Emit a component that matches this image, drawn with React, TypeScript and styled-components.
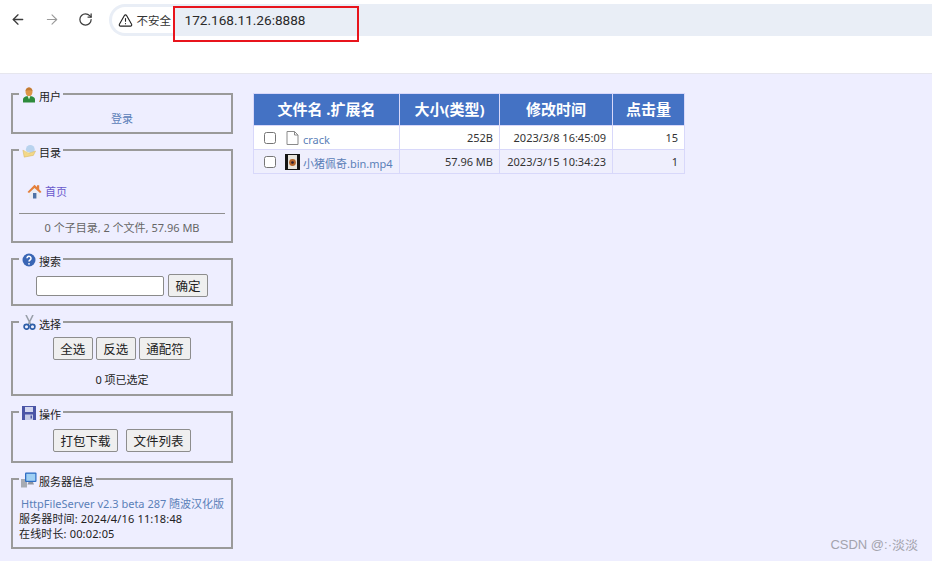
import React from "react";
import styled, { createGlobalStyle } from "styled-components";
import { ArrowLeft, ArrowRight, RotateCw, TriangleAlert } from "lucide-react";

const GlobalStyle = createGlobalStyle`
  html, body {
    margin: 0;
    padding: 0;
    background: #eeeeff;
  }
  body {
    width: 932px;
    height: 561px;
    overflow: hidden;
    font-family: "Noto Sans", "Noto Sans CJK SC", sans-serif;
    font-size: 11px;
    line-height: 15px;
    color: #333;
  }
`;

const Screen = styled.div`
  position: relative;
  width: 932px;
  height: 561px;
  overflow: hidden;
`;

const BrowserBar = styled.header`
  height: 74px;
  box-sizing: border-box;
  background: #fff;
  border-bottom: 1px solid #e6e6ee;
  padding: 4px 0 0 10px;
  display: flex;
  align-items: flex-start;
`;

const NavButton = styled.button<{ $muted?: boolean }>`
  width: 16px;
  height: 30px;
  padding: 0;
  margin-right: 17.5px;
  border: 0;
  background: none;
  display: flex;
  align-items: center;
  justify-content: center;
  color: ${(p) => (p.$muted ? "#9a9a9a" : "#3c3c3c")};
`;

const AddressBar = styled.div`
  flex: 1;
  height: 32px;
  margin-left: -2px;
  border-radius: 16px 0 0 16px;
  background: #e9eef6;
  display: flex;
  align-items: center;
  padding-left: 3px;
`;

const SecurityChip = styled.div`
  width: 62px;
  height: 26px;
  box-sizing: border-box;
  padding-left: 6px;
  border-radius: 13px 0 0 13px;
  background: #fff;
  display: flex;
  align-items: center;
  gap: 4px;
  font-size: 11.5px;
  color: #333;
  white-space: nowrap;
`;

const UrlText = styled.span`
  margin-left: 11px;
  font-family: "Roboto", sans-serif;
  font-size: 13.6px;
  color: #2a2a2a;
`;

const RedMark = styled.div`
  position: absolute;
  left: 173px;
  top: 6px;
  width: 186px;
  height: 36px;
  box-sizing: border-box;
  border: 2px solid #e8141c;
`;

const Page = styled.main`
  display: flex;
  align-items: flex-start;
  padding: 9px 0 0 11px;
`;

const Sidebar = styled.aside`
  width: 222px;
  margin-right: 20px;
  display: flex;
  flex-direction: column;
  gap: 5px;
`;

const Panel = styled.fieldset<{ $height: number }>`
  height: ${(p) => p.$height}px;
  box-sizing: border-box;
  margin: 0;
  padding: 0 6px;
  min-width: 0;
  border: 2px solid #9a9a9a;
  text-align: center;
  display: flex;
  flex-direction: column;
  align-items: center;
`;

const PanelTitle = styled.legend`
  height: 22px;
  box-sizing: border-box;
  margin-left: 0;
  padding: 6px 2px 0 3px;
  display: flex;
  align-items: center;
  gap: 3px;
  font-size: 11px;
  line-height: 16px;
  color: #222;
  text-align: left;
`;

const IconSlot = styled.span`
  width: 14px;
  height: 17px;
  margin-top: -3px;
  align-self: flex-start;
  display: flex;
  align-items: center;
  justify-content: center;
`;

const PanelLink = styled.a`
  color: #5b80b8;
  text-decoration: none;
`;

const LoginLink = styled(PanelLink)`
  margin-top: 6px;
`;

const FolderBlock = styled.div`
  width: 100%;
  height: 38px;
  box-sizing: border-box;
  padding: 19px 0 0 8px;
  text-align: left;
  display: flex;
  align-items: flex-end;
  gap: 3px;
`;

const VisitedLink = styled.a`
  color: #6a5acd;
  text-decoration: none;
`;

const FolderRule = styled.hr`
  width: 100%;
  margin: 14px 0 6px;
  border: 0;
  border-top: 1px solid #8f8f8f;
`;

const MutedLine = styled.div`
  color: #666;
`;

const ActionRow = styled.div<{ $top: number; $gap?: number }>`
  margin-top: ${(p) => p.$top}px;
  display: flex;
  justify-content: center;
  gap: ${(p) => p.$gap ?? 3}px;
  align-items: center;
`;

const SearchBox = styled.input`
  width: 128px;
  height: 20px;
  box-sizing: border-box;
  margin-right: 1px;
  border: 1px solid #8a8a8a;
  border-radius: 2px;
  background: #fff;
`;

const PlainButton = styled.button`
  height: 23px;
  box-sizing: border-box;
  padding: 0 6.5px;
  font-family: inherit;
  font-size: 12.5px;
  color: #222;
  background: #efefef;
  border: 1px solid #8d8d8d;
  border-radius: 2px;
  white-space: nowrap;
`;

const SelectedCount = styled.div`
  margin-top: 12px;
  color: #222;
`;

const InfoBlock = styled.div`
  width: 100%;
  margin-top: 6px;
  text-align: left;
  color: #222;
  white-space: nowrap;
`;

const ServerLink = styled(PanelLink)`
  display: block;
  padding-left: 2px;
`;

const InfoLine = styled.div`
  letter-spacing: 0.15px;
`;

const FileTable = styled.table`
  border-collapse: separate;
  border-spacing: 1px;
  margin-top: 10px;
  background: #d8d8fa;
  padding: 0;
  table-layout: fixed;
  width: 432px;
`;

const HeadCell = styled.th<{ $width: number }>`
  width: ${(p) => p.$width}px;
  height: 31px;
  padding: 0;
  background: #4472c4;
  color: #fff;
  font-size: 15px;
  font-weight: 700;
  text-align: center;
`;

const Row = styled.tr<{ $alt?: boolean }>`
  height: 23px;
  td {
    background: ${(p) => (p.$alt ? "#efeffd" : "#fff")};
  }
`;

const NameCell = styled.td`
  padding: 0 0 0 10px;
  white-space: nowrap;
`;

const NameWrap = styled.div`
  display: flex;
  align-items: center;
`;

const FileCheck = styled.input`
  width: 12px;
  height: 12px;
  margin: 0 9px 0 0;
`;

const FileIconSlot = styled.span`
  width: 15px;
  height: 16px;
  display: flex;
  justify-content: center;
  align-items: center;
`;

const FileLink = styled(PanelLink)`
  margin: 3px 0 0 3px;
`;

const ValueCell = styled.td`
  padding: 0 6px 0 0;
  text-align: right;
  color: #333;
  white-space: nowrap;
`;

const Watermark = styled.div`
  position: absolute;
  right: 14px;
  bottom: 9px;
  font-family: "Liberation Sans", "Noto Sans CJK SC", sans-serif;
  font-size: 13px;
  color: #a3a3ad;
`;

const UserIcon = () => (
  <svg width="14" height="16" viewBox="0 0 14 16">
    <path d="M3.5 4.5C3.5 2 5 .5 7 .5s3.5 1.5 3.5 4S9 9.5 7 9.5 3.5 7 3.5 4.5z" fill="#dd9648" />
    <path d="M3.5 4C4 1.8 5.2.5 7 .5S10 1.8 10.5 4C9 3 5 3 3.5 4z" fill="#c27a33" />
    <path d="M1 15.5v-3C1 10.2 3.5 9 7 9s6 1.2 6 3.5v3z" fill="#2e8b3c" />
    <path d="M5.5 9h3L7 12.5z" fill="#e4f3e0" />
  </svg>
);

const FolderIcon = () => (
  <svg width="16" height="16" viewBox="0 0 16 16">
    <circle cx="9.5" cy="6" r="5" fill="#b9d3ee" />
    <path d="M1 7l1.5 8L13 13l2.5-5-7.5 2.5z" fill="#f3d888" stroke="#d2ae58" strokeWidth="0.5" />
    <path d="M1 7l7 3.5 7.5-2.5-6.5 2z" fill="#fbeebc" />
  </svg>
);

const HomeIcon = () => (
  <svg width="15" height="15" viewBox="0 0 15 15">
    <path d="M2 7l5.5-5L13 7v7.5H2z" fill="#eceef4" />
    <path d="M.5 8L7.5 .8 10 3V1.2h2.2V5.2L14.5 8 13 9 7.5 4 2 9z" fill="#e47f3c" />
    <rect x="6" y="9" width="3.4" height="5.5" fill="#4f73a6" />
  </svg>
);

const HelpIcon = () => (
  <svg width="14" height="14" viewBox="0 0 14 14">
    <circle cx="7" cy="7" r="6.5" fill="#3a66b5" />
    <path d="M5 5.2a2 2 0 1 1 3 1.8c-.7.4-1 .8-1 1.6" fill="none" stroke="#fff" strokeWidth="1.5" />
    <circle cx="7" cy="10.8" r="0.9" fill="#fff" />
  </svg>
);

const ScissorsIcon = () => (
  <svg width="13" height="15" viewBox="0 0 13 15">
    <path d="M3 0l5 10M10 0L5 10" stroke="#9aa0aa" strokeWidth="1.6" fill="none" />
    <circle cx="3.5" cy="11.8" r="2.4" fill="none" stroke="#2f5fa8" strokeWidth="1.7" />
    <circle cx="9.5" cy="11.8" r="2.4" fill="none" stroke="#2f5fa8" strokeWidth="1.7" />
  </svg>
);

const SaveIcon = () => (
  <svg width="14" height="14" viewBox="0 0 14 14">
    <path d="M0 0h14v14H0z" fill="#4b55a6" />
    <rect x="3" y="1" width="8" height="5" fill="#d3d7ef" />
    <rect x="3" y="8.5" width="8" height="5.5" fill="#c6cbe6" />
    <rect x="8.5" y="9.5" width="1.5" height="3" fill="#4b55a6" />
  </svg>
);

const ServerIcon = () => (
  <svg width="16" height="16" viewBox="0 0 16 16" style={{ flex: "none" }}>
    <rect x="0" y="7" width="6" height="8.5" fill="#a7abb3" />
    <rect x="4" y="0.5" width="11.5" height="9.5" rx="1" fill="#2f6dc4" />
    <rect x="5.3" y="1.8" width="9" height="7" fill="#9fd0f4" />
    <path d="M7.5 10h4.5l1 2.5H6.5z" fill="#8f96a3" />
  </svg>
);

const PageIcon = () => (
  <svg width="13" height="14" viewBox="0 0 13 14">
    <path d="M1 .5h7.5L12 4v9.5H1z" fill="#fff" stroke="#8a8a8a" />
    <path d="M8.5.5V4H12" fill="none" stroke="#8a8a8a" />
  </svg>
);

const VideoIcon = () => (
  <svg width="15" height="16" viewBox="0 0 15 16">
    <rect width="15" height="16" fill="#151515" />
    <rect x="3" y="1" width="9" height="14" fill="#e8e4dc" />
    <circle cx="7.5" cy="8.5" r="3.4" fill="#b5652a" />
    <circle cx="7.5" cy="8.5" r="1.3" fill="#2a1c30" />
  </svg>
);

const columns = [
  { label: "文件名 .扩展名", width: 145 },
  { label: "大小(类型)", width: 99 },
  { label: "修改时间", width: 112 },
  { label: "点击量", width: 71 },
];

const files = [
  { name: "crack", size: "252B", date: "2023/3/8 16:45:09", hits: 15, icon: <PageIcon /> },
  { name: "小猪佩奇.bin.mp4", size: "57.96 MB", date: "2023/3/15 10:34:23", hits: 1, icon: <VideoIcon /> },
];

export default function App() {
  return (
    <Screen>
      <GlobalStyle />
      <BrowserBar>
        <NavButton><ArrowLeft size={17} strokeWidth={2} /></NavButton>
        <NavButton $muted><ArrowRight size={17} strokeWidth={1.6} /></NavButton>
        <NavButton><RotateCw size={15} strokeWidth={2} /></NavButton>
        <AddressBar>
          <SecurityChip>
            <TriangleAlert size={15} strokeWidth={1.8} color="#222" />
            不安全
          </SecurityChip>
          <UrlText>172.168.11.26:8888</UrlText>
        </AddressBar>
      </BrowserBar>
      <RedMark />
      <Page>
        <Sidebar>
          <Panel $height={51}>
            <PanelTitle><IconSlot><UserIcon /></IconSlot>用户</PanelTitle>
            <LoginLink href="#">登录</LoginLink>
          </Panel>
          <Panel $height={104}>
            <PanelTitle><IconSlot><FolderIcon /></IconSlot>目录</PanelTitle>
            <FolderBlock>
              <HomeIcon />
              <VisitedLink href="#">首页</VisitedLink>
            </FolderBlock>
            <FolderRule />
            <MutedLine>0 个子目录, 2 个文件, 57.96 MB</MutedLine>
          </Panel>
          <Panel $height={58}>
            <PanelTitle><IconSlot><HelpIcon /></IconSlot>搜索</PanelTitle>
            <ActionRow $top={4}>
              <SearchBox />
              <PlainButton>确定</PlainButton>
            </ActionRow>
          </Panel>
          <Panel $height={85}>
            <PanelTitle><IconSlot><ScissorsIcon /></IconSlot>选择</PanelTitle>
            <ActionRow $top={4}>
              <PlainButton>全选</PlainButton>
              <PlainButton>反选</PlainButton>
              <PlainButton>通配符</PlainButton>
            </ActionRow>
            <SelectedCount>0 项已选定</SelectedCount>
          </Panel>
          <Panel $height={62}>
            <PanelTitle><IconSlot><SaveIcon /></IconSlot>操作</PanelTitle>
            <ActionRow $top={6} $gap={8}>
              <PlainButton>打包下载</PlainButton>
              <PlainButton>文件列表</PlainButton>
            </ActionRow>
          </Panel>
          <Panel $height={81}>
            <PanelTitle><IconSlot><ServerIcon /></IconSlot>服务器信息</PanelTitle>
            <InfoBlock>
              <ServerLink href="#">HttpFileServer v2.3 beta 287 随波汉化版</ServerLink>
              <InfoLine>服务器时间: 2024/4/16 11:18:48</InfoLine>
              <InfoLine>在线时长: 00:02:05</InfoLine>
            </InfoBlock>
          </Panel>
        </Sidebar>
        <FileTable>
          <thead>
            <tr>
              {columns.map((c) => (
                <HeadCell key={c.label} $width={c.width}>{c.label}</HeadCell>
              ))}
            </tr>
          </thead>
          <tbody>
            {files.map((f, i) => (
              <Row key={f.name} $alt={i % 2 === 1}>
                <NameCell>
                  <NameWrap>
                    <FileCheck type="checkbox" />
                    <FileIconSlot>{f.icon}</FileIconSlot>
                    <FileLink href="#">{f.name}</FileLink>
                  </NameWrap>
                </NameCell>
                <ValueCell>{f.size}</ValueCell>
                <ValueCell>{f.date}</ValueCell>
                <ValueCell>{f.hits}</ValueCell>
              </Row>
            ))}
          </tbody>
        </FileTable>
      </Page>
      <Watermark>CSDN @:·淡淡</Watermark>
    </Screen>
  );
}
